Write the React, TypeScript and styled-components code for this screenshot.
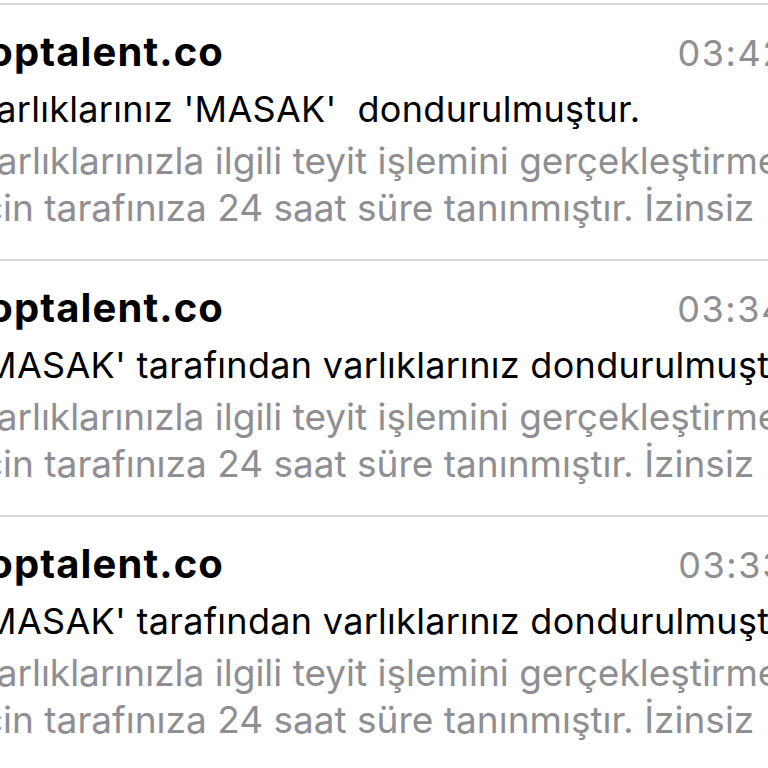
import React from 'react';
import styled, { createGlobalStyle } from 'styled-components';

interface Message {
  sender: string;
  time: string;
  subject: string;
  preview: string[];
}

const PREVIEW = [
  'Varlıklarınızla ilgili teyit işlemini gerçekleştirmeniz',
  'için tarafınıza 24 saat süre tanınmıştır. İzinsiz',
];

const messages: Message[] = [
  {
    sender: 'toptalent.co',
    time: '03:42',
    subject: "Varlıklarınız 'MASAK'  dondurulmuştur.",
    preview: PREVIEW,
  },
  {
    sender: 'toptalent.co',
    time: '03:34',
    subject: "'MASAK' tarafından varlıklarınız dondurulmuştur.",
    preview: PREVIEW,
  },
  {
    sender: 'toptalent.co',
    time: '03:33',
    subject: "'MASAK' tarafından varlıklarınız dondurulmuştur.",
    preview: PREVIEW,
  },
];

const GlobalStyle = createGlobalStyle`
  html, body {
    margin: 0;
    padding: 0;
    background: #ffffff;
    overflow: hidden;
  }
  body {
    font-family: Inter, "Noto Sans", "Liberation Sans", sans-serif;
    -webkit-font-smoothing: antialiased;
  }
`;

const Screen = styled.div`
  width: 768px;
  height: 768px;
  overflow: hidden;
  background: #ffffff;
  padding-top: 3px;
  box-sizing: border-box;
`;

const Row = styled.div`
  border-top: 2px solid #d8d8dc;
  height: 256px;
  box-sizing: border-box;
`;

// the screenshot is a crop: the list is pulled left and clipped on the right
const Content = styled.div`
  margin-left: -27px;
  width: 813px;
  padding-top: 22px;
`;

const Header = styled.div`
  display: flex;
  justify-content: space-between;
  align-items: baseline;
  height: 54px;
`;

const Sender = styled.div`
  font-size: 40px;
  font-weight: 700;
  color: #000000;
  letter-spacing: 1.1px;
`;

const Time = styled.div`
  font-size: 36px;
  color: #8e8e93;
  font-weight: 400;
  letter-spacing: 1.6px;
`;

const Subject = styled.div`
  font-size: 36px;
  color: #000000;
  line-height: 56px;
  white-space: pre;
  letter-spacing: 0.3px;
`;

const Preview = styled.div`
  font-size: 37px;
  color: #8e8e93;
  line-height: 47px;
  white-space: pre;
  letter-spacing: 0;
`;

const App: React.FC = () => {
  return (
    <>
      <GlobalStyle />
      <Screen>
        {messages.map((m, i) => (
          <Row key={i}>
            <Content>
              <Header>
                <Sender>{m.sender}</Sender>
                <Time>{m.time}</Time>
              </Header>
              <Subject>{m.subject}</Subject>
              {m.preview.map((line, j) => (
                <Preview key={j}>{line}</Preview>
              ))}
            </Content>
          </Row>
        ))}
      </Screen>
    </>
  );
};

export default App;
